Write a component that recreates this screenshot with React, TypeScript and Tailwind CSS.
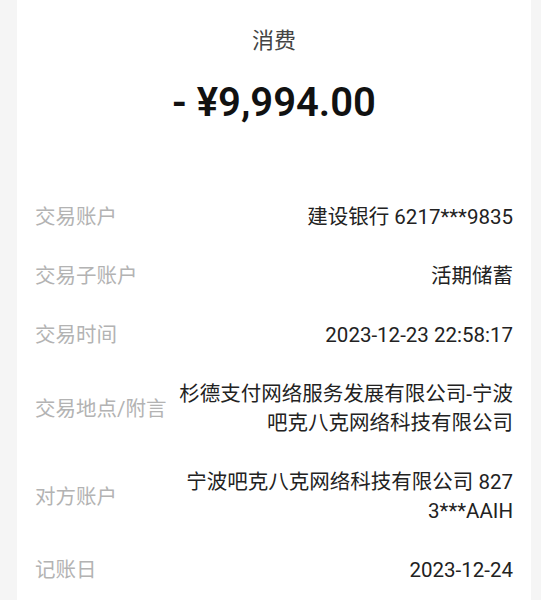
import React from "react";

const rows: { label: string; value: React.ReactNode }[] = [
  { label: "交易账户", value: "建设银行 6217***9835" },
  { label: "交易子账户", value: "活期储蓄" },
  { label: "交易时间", value: "2023-12-23 22:58:17" },
  {
    label: "交易地点/附言",
    value: (
      <>
        杉德支付网络服务发展有限公司-宁波
        <br />
        吧克八克网络科技有限公司
      </>
    ),
  },
  {
    label: "对方账户",
    value: (
      <>
        宁波吧克八克网络科技有限公司 827
        <br />
        3***AAIH
      </>
    ),
  },
  { label: "记账日", value: "2023-12-24" },
];

export default function App() {
  return (
    <div
      className="min-h-[600px] w-[541px] bg-[#f5f5f5] pl-[17px] pr-[10px]"
      style={{ fontFamily: "Roboto, 'Noto Sans CJK SC', sans-serif" }}
    >
      <div className="min-h-[600px] bg-white pt-[26px]">
        <div className="text-center text-[22px] leading-[30px] text-[#444]">消费</div>
        <div className="mt-[23px] text-center text-[40px] font-semibold leading-[48px] text-[#111]">
          - ¥9,994.00
        </div>
        <div className="mt-[61px] px-[18px]">
          {rows.map((r) => (
            <div key={r.label} className="flex items-center justify-between gap-3 py-[15px]">
              <div className="shrink-0 text-[20.5px] leading-[29px] text-[#b3b3b3]">{r.label}</div>
              <div className="text-right text-[20.5px] leading-[29px] text-[#222]">{r.value}</div>
            </div>
          ))}
        </div>
      </div>
    </div>
  );
}
